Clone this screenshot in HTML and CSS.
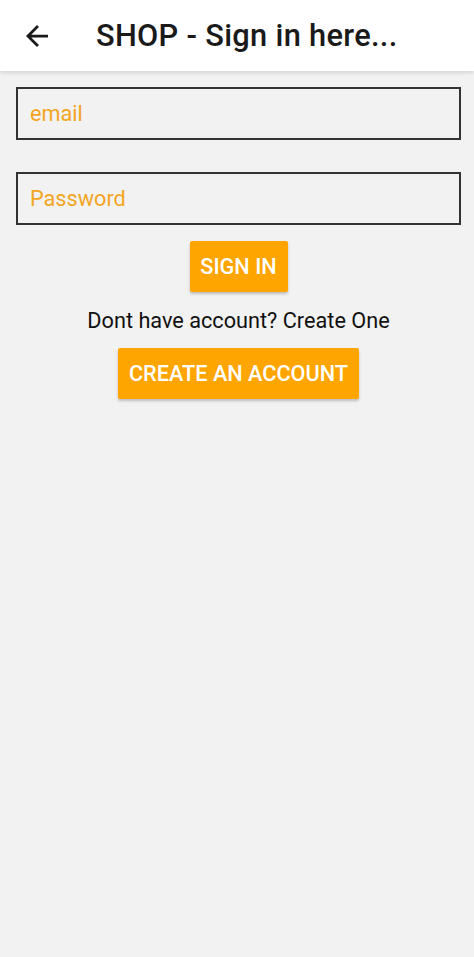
FILE: index.html
```html
<!DOCTYPE html>
<html>
<head>
<meta charset="utf-8">
<link rel="stylesheet" href="styles.css">
</head>
<body>
<header class="appbar">
  <svg class="back" viewBox="4 4 16 16" width="22" height="22"><path d="M20 11H7.83l5.59-5.59L12 4l-8 8 8 8 1.41-1.41L7.83 13H20v-2z" fill="#1a1a1a"/></svg>
  <h1 class="title">SHOP - Sign in here...</h1>
</header>
<main class="form">
  <div class="field"><span class="placeholder">email</span></div>
  <div class="field"><span class="placeholder">Password</span></div>
  <button class="btn signin">SIGN IN</button>
  <p class="hint">Dont have account? Create One</p>
  <button class="btn create">CREATE AN ACCOUNT</button>
</main>
</body>
</html>
```
FILE: styles.css
```css
html, body {
  margin: 0;
  padding: 0;
  background: #f2f2f2;
  font-family: Roboto, "Liberation Sans", sans-serif;
  height: 100%;
}
.appbar {
  height: 71px;
  background: #ffffff;
  display: flex;
  align-items: center;
  box-shadow: 0 2px 4px rgba(0,0,0,0.12);
  position: relative;
}
.back {
  margin-left: 26px;
  flex: none;
}
.title {
  margin: 0 0 0 48px;
  font-size: 30.8px;
  font-weight: 500;
  letter-spacing: 0.3px;
  color: #1a1a1a;
}
.form {
  display: flex;
  flex-direction: column;
  align-items: center;
  padding: 16px 13px 0 16px;
}
.field {
  align-self: stretch;
  height: 49px;
  border: 2px solid #333333;
  display: flex;
  align-items: center;
  padding-left: 12px;
  margin-bottom: 32px;
}
.field + .field {
  margin-bottom: 16px;
}
.placeholder {
  font-size: 21.7px;
  color: #f3a51f;
}
.btn {
  background: #ffa500;
  color: #ffffff;
  border: none;
  border-radius: 2px;
  font-family: Roboto, "Liberation Sans", sans-serif;
  font-size: 21.7px;
  font-weight: 500;
  height: 51px;
  padding: 0;
  box-shadow: 0 2px 3px rgba(0,0,0,0.22);
}
.signin {
  width: 98px;
}
.create {
  width: 241px;
}
.hint {
  margin: 17px 0 15px;
  font-size: 21.7px;
  color: #111111;
  line-height: 24px;
}
```
